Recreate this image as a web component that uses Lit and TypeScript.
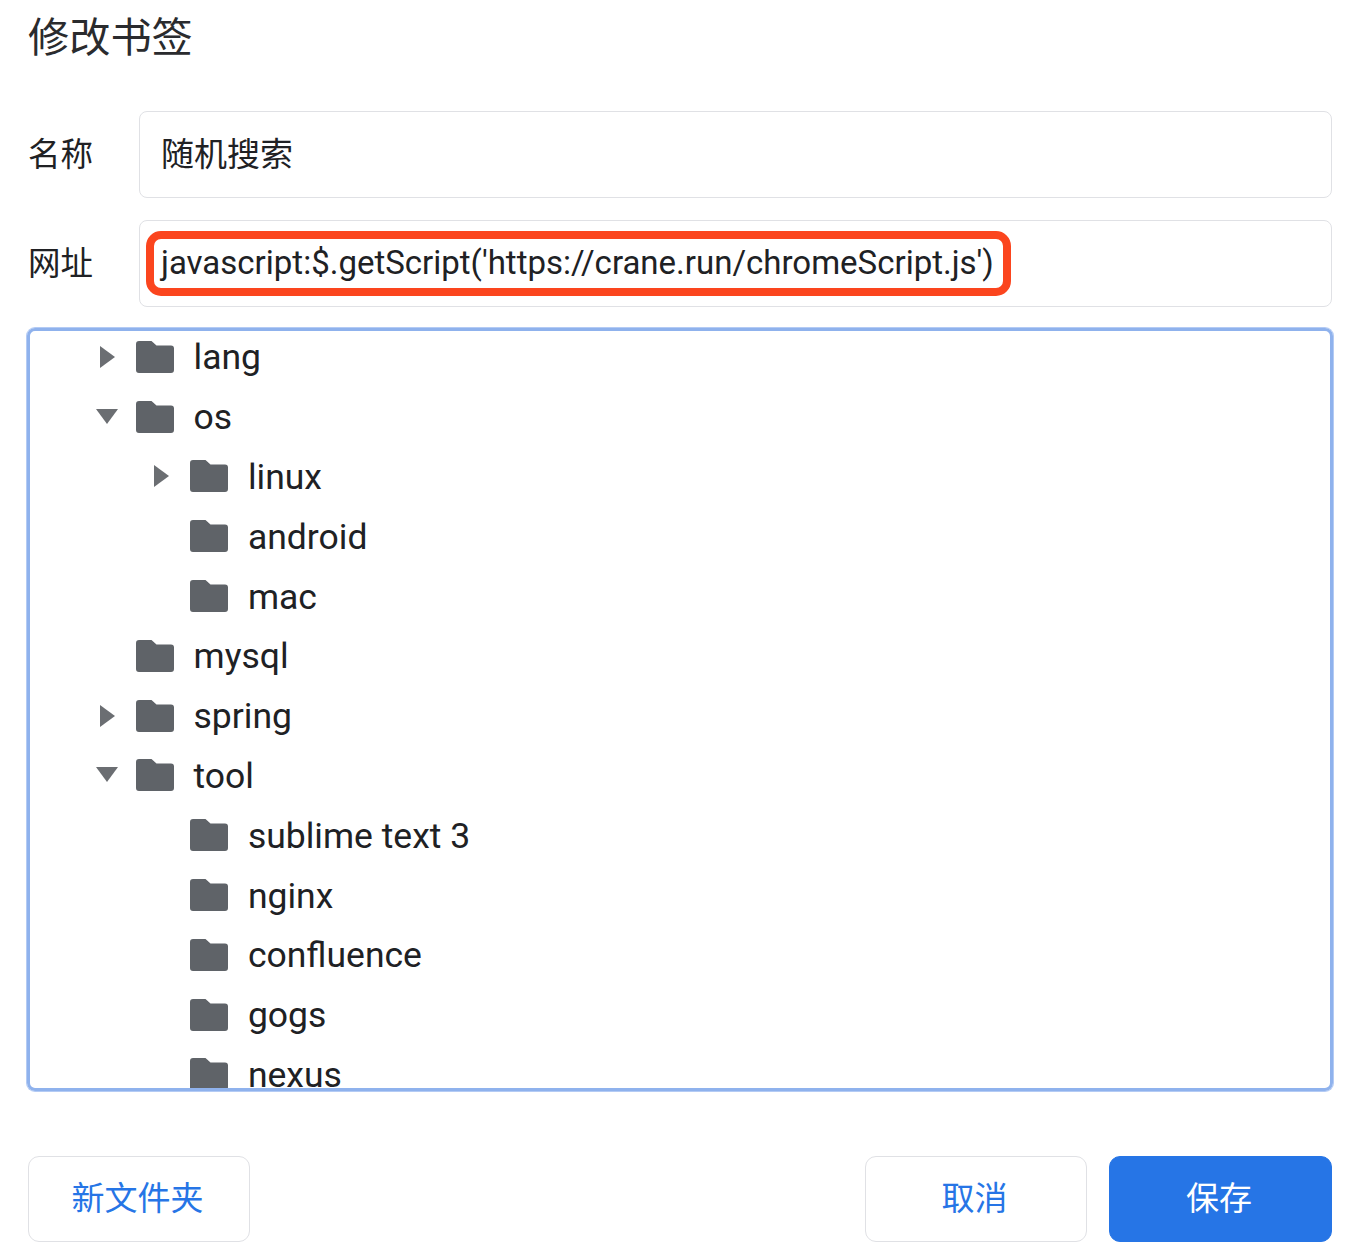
import { LitElement, html, css, svg } from "lit";
import { customElement } from "lit/decorators.js";

type Row = { name: string; depth: number; arrow?: "right" | "down" };

const ROWS: Row[] = [
  { name: "lang", depth: 0, arrow: "right" },
  { name: "os", depth: 0, arrow: "down" },
  { name: "linux", depth: 1, arrow: "right" },
  { name: "android", depth: 1 },
  { name: "mac", depth: 1 },
  { name: "mysql", depth: 0 },
  { name: "spring", depth: 0, arrow: "right" },
  { name: "tool", depth: 0, arrow: "down" },
  { name: "sublime text 3", depth: 1 },
  { name: "nginx", depth: 1 },
  { name: "confluence", depth: 1 },
  { name: "gogs", depth: 1 },
  { name: "nexus", depth: 1 },
];

const folder = svg`<svg class="folder" viewBox="0 0 38 32" width="38" height="32"><path d="M3 0H15.5l5 4.5H35a3 3 0 0 1 3 3V29a3 3 0 0 1-3 3H3a3 3 0 0 1-3-3V3a3 3 0 0 1 3-3z" fill="#5f6368"/></svg>`;
const right = svg`<svg viewBox="0 0 30 30" width="30" height="30"><path d="M8 4L23 15L8 26z" fill="#6b6e72"/></svg>`;
const down = svg`<svg viewBox="0 0 30 30" width="30" height="30"><path d="M4 7H26L15 22z" fill="#6b6e72"/></svg>`;

@customElement("app-root")
export class AppRoot extends LitElement {
  static styles = css`
    :host {
      display: block;
      width: 1360px;
      height: 1260px;
      box-sizing: border-box;
      padding: 0 28px;
      background: #fff;
      overflow: hidden;
      font-family: Roboto, "Noto Sans CJK SC", sans-serif;
      color: #202124;
    }
    .title {
      height: 111px;
      padding-top: 13px;
      box-sizing: border-box;
      font-size: 41.2px;
      line-height: 50px;
      color: #2a2b2e;
    }
    .field {
      display: flex;
      align-items: center;
      height: 87px;
      margin-bottom: 22px;
    }
    .label {
      width: 111px;
      font-size: 32.5px;
      line-height: 48px;
      flex: none;
    }
    .box {
      flex: 1;
      height: 87px;
      box-sizing: border-box;
      border: 1.5px solid #e0e1e5;
      border-radius: 8px;
      display: flex;
      align-items: center;
      padding-left: 21px;
      padding-bottom: 6px;
      font-size: 33px;
    }
    .box.url {
      padding-left: 6px;
      padding-bottom: 0;
    }
    .mark {
      display: flex;
      align-items: center;
      box-sizing: border-box;
      height: 65px;
      width: 865px;
      border: 8px solid #fb451e;
      border-radius: 15px;
      padding: 0 0 2px 7px;
      font-size: 33px;
      white-space: nowrap;
    }
    .tree {
      margin: -1px -1px 0;
      height: 763px;
      box-sizing: border-box;
      border: 3px solid #8fb2ed;
      box-shadow: 0 0 0 1px #b4cbf4;
      border-radius: 8px;
      overflow: hidden;
    }
    .list {
      margin-top: -4px;
    }
    .row {
      display: flex;
      align-items: center;
      height: 59.8px;
      font-size: 35.5px;
    }
    .name {
      padding-top: 1px;
    }
    .arrow {
      width: 30px;
      height: 30px;
      flex: none;
      margin-right: 14px;
    }
    .arrow svg {
      display: block;
    }
    .folder {
      flex: none;
      margin-right: 19.5px;
    }
    .actions {
      display: flex;
      align-items: center;
      gap: 22px;
      margin-top: 65px;
    }
    .btn {
      width: 222px;
      height: 86px;
      box-sizing: border-box;
      border: 1.5px solid #e0e1e5;
      border-radius: 11px;
      display: flex;
      align-items: center;
      justify-content: center;
      padding: 0 3px 7px 0;
      font-size: 33px;
      color: #2675e6;
      background: #fff;
    }
    .btn.primary {
      width: 223px;
      background: #2675e6;
      border-color: #2675e6;
      color: #fff;
    }
    .spacer {
      flex: 1;
    }
  `;

  render() {
    return html`
      <div class="title">修改书签</div>
      <div class="field">
        <div class="label">名称</div>
        <div class="box">随机搜索</div>
      </div>
      <div class="field">
        <div class="label">网址</div>
        <div class="box url">
          <div class="mark">javascript:$.getScript('https://crane.run/chromeScript.js')</div>
        </div>
      </div>
      <div class="tree">
        <div class="list">
          ${ROWS.map(
            (r) => html`<div class="row" style="padding-left:${62 + r.depth * 54.4}px">
              <span class="arrow">${r.arrow === "right" ? right : r.arrow === "down" ? down : ""}</span>
              ${folder}
              <span class="name">${r.name}</span>
            </div>`
          )}
        </div>
      </div>
      <div class="actions">
        <div class="btn">新文件夹</div>
        <div class="spacer"></div>
        <div class="btn">取消</div>
        <div class="btn primary">保存</div>
      </div>
    `;
  }
}
